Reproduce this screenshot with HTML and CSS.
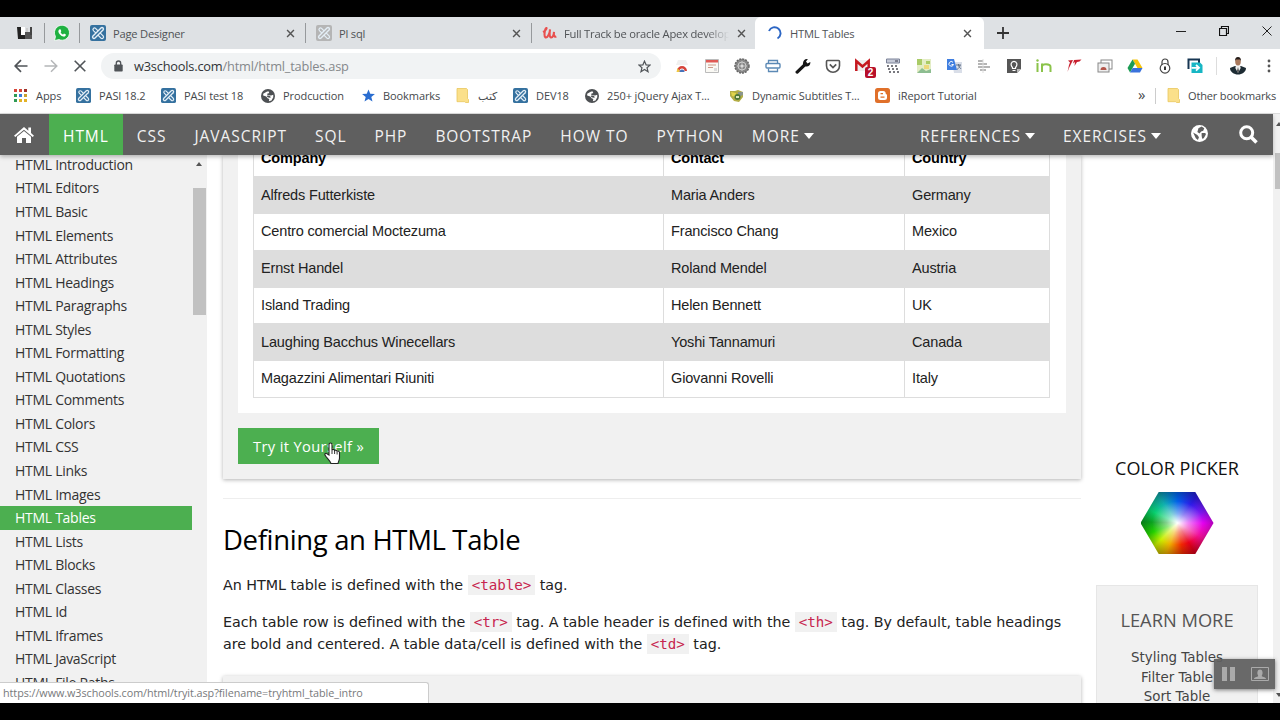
FILE: index.html
```html
<!DOCTYPE html>
<html lang="en">
<head>
    <meta charset="UTF-8">
    <meta name="viewport" content="width=device-width, initial-scale=1.0">
    <title>HTML Tables</title>
    <link rel="stylesheet" href="styles.css">
</head>
<body>
    <!-- Shared icons -->
    <svg class="defs" width="0" height="0">
        <symbol id="apex" viewBox="0 0 16 16">
            <rect width="16" height="16" rx="2" fill="currentColor"/>
            <g fill="none" stroke-linecap="round">
                <path d="M4.500 4.500l7.500 7.500" stroke="#e4eef6" stroke-width="4.200"/>
                <path d="M4.500 4.500l7.500 7.500" stroke="currentColor" stroke-width="1.800"/>
                <path d="M12 4l-8 8" stroke="#e4eef6" stroke-width="4.200"/>
                <path d="M12 4l-8 8" stroke="currentColor" stroke-width="1.500"/>
            </g>
        </symbol>
        <symbol id="close" viewBox="0 0 10 10">
            <path d="M1.2 1.2l7.6 7.6M8.8 1.2L1.2 8.8" stroke="currentColor" stroke-width="1.6"/>
        </symbol>
        <symbol id="globe" viewBox="0 0 16 16">
            <circle cx="8" cy="8" r="8" fill="currentColor"/>
            <path d="M2.500 5.500l4-2.500 2-.5 1 2-2.500 1 .5 1.500 4 .5 2.500-1v3l-2 3.500-3 1 .5-2.500-2-1-1.500-2-3.500-1z" fill="#fff"/>
            <path d="M7 7.500l3 .5 1.500 1.500-2 .5-2.500-1z" fill="currentColor"/>
        </symbol>
        <symbol id="globe2" viewBox="0 0 16 16">
            <circle cx="8" cy="8" r="8" fill="#fff"/>
            <path d="M7 3l3-1.500 2.500 1.500-1 2.500-2 .5-1.500 2-2-1.500zM10 7.500l3.500 0 .5 1.500-2 3.500-1.500.5-.5-3zM2 7l4 2.500 1.500 2-1 2.500-2-1.500z" fill="#5f5f5f"/>
        </symbol>
        <symbol id="folder" viewBox="0 0 13 15">
            <path d="M1 .5h9.500l1 1v9l1 1v3h-3l-1-.8H1z" fill="#fbe08a" stroke="#e8c65d" stroke-width=".8"/>
        </symbol>
    </svg>

    <div class="screen">
        <!-- Tab strip -->
        <div class="tabs">
            <div class="tab pinned first">
                <svg width="16" height="14" viewBox="0 0 16 14"><path d="M0 1h4v8h4v4H1z" fill="#222"/><path d="M4 1h4v8H4z" fill="#fff"/><path d="M8 6h7v7H8z" fill="#555"/><path d="M9 2h2v4H9z" fill="#ccc"/><path d="M13 1h2v8h-2z" fill="#444"/></svg>
            </div>
            <div class="tab pinned">
                <svg width="16" height="16" viewBox="0 0 16 16"><path d="M.5 15.500l1-4A7.500 7.500 0 1 1 5 14.600z" fill="#1fb141" stroke="#fff" stroke-width=".8"/><path d="M5 4.500l1.500-.2.8 2-.7.9c.6 1.200 1.300 1.800 2.500 2.300l.9-.9 1.900 1c0 1.500-1.300 2.200-2.400 2C6.800 11 4.500 8.500 4.300 6.200z" fill="#fff"/></svg>
            </div>
            <div class="tab">
                <svg class="fav blue" width="16" height="16"><use href="#apex"/></svg>
                <span class="tab-title">Page Designer</span>
                <svg class="x" width="9" height="9"><use href="#close"/></svg>
            </div>
            <div class="tab">
                <svg class="fav grey" width="16" height="16"><use href="#apex"/></svg>
                <span class="tab-title">Pl sql</span>
                <svg class="x" width="9" height="9"><use href="#close"/></svg>
            </div>
            <div class="tab last">
                <svg class="fav" width="15" height="12" viewBox="0 0 15 12"><path d="M1 5c2-1 4-3.500 3.500-4C3 1 1.500 9 3.500 10.500 6 11 8 5 8 2.500 7.500 6 7.500 10 9 10.500c2 .2 3-3.500 3-5.500-.3 2-.3 5.500 2.300 4.500" fill="none" stroke="#e8504f" stroke-width="2.100"/></svg>
                <span class="tab-title fade">Full Track be oracle Apex develop</span>
                <svg class="x" width="9" height="9"><use href="#close"/></svg>
            </div>
            <div class="tab active">
                <svg class="fav spin" width="14" height="14" viewBox="0 0 14 14"><path d="M1 5A6 6 0 1 1 9.500 12.500" fill="none" stroke="#2c66c4" stroke-width="1.900"/></svg>
                <span class="tab-title">HTML Tables</span>
                <svg class="x" width="9" height="9"><use href="#close"/></svg>
            </div>
            <svg class="plus" width="12" height="12" viewBox="0 0 12 12"><path d="M6 0v12M0 6h12" stroke="#333" stroke-width="1.800"/></svg>
            <div class="window-btns">
                <svg width="10" height="10" viewBox="0 0 10 10"><path d="M0 5.500h10" stroke="#222"/></svg>
                <svg width="10" height="10" viewBox="0 0 10 10"><path d="M.5 2.500h7v7h-7zM2.500 2.500v-2h7v7h-2" fill="none" stroke="#111" stroke-width="1.200"/></svg>
                <svg width="10" height="10" viewBox="0 0 10 10"><path d="M.5.5l9 9M9.500.5l-9 9" stroke="#222"/></svg>
            </div>
        </div>

        <!-- Address bar -->
        <div class="toolbar">
            <div class="history">
                <svg width="14" height="14" viewBox="0 0 14 14"><path d="M13.500 7H1.500M7 1.200L1.200 7 7 12.800" fill="none" stroke="#505458" stroke-width="1.700"/></svg>
                <svg width="14" height="14" viewBox="0 0 14 14"><path d="M.5 7h12M7 1.200L12.800 7 7 12.800" fill="none" stroke="#b4b6b8" stroke-width="1.500"/></svg>
                <svg width="12" height="12" viewBox="0 0 12 12"><path d="M.7.7l10.600 10.600M11.300.7L.7 11.300" stroke="#505458" stroke-width="1.600"/></svg>
            </div>
            <div class="address">
                <svg width="9" height="12" viewBox="0 0 9 12"><path d="M2.300 5V3.200a2.200 2.200 0 0 1 4.400 0V5" fill="none" stroke="#505458" stroke-width="1.300"/><rect x=".3" y="4.500" width="8.400" height="7" rx=".8" fill="#505458"/></svg>
                <span class="url">w3schools.com<span>/html/html_tables.asp</span></span>
                <svg class="star" width="13" height="13" viewBox="0 0 14 14"><path d="M7 1.200l1.700 4 4.300.3-3.300 2.800 1.100 4.300L7 10.300l-3.800 2.300 1.100-4.300L1 5.500l4.300-.3z" fill="none" stroke="#505458" stroke-width="1.300"/></svg>
            </div>
            <div class="extensions">
                <svg viewBox="0 0 16 16"><path d="M4 2h8l2 5H2z" fill="#f0f0f0"/><path d="M3 13a5 5 0 0 1 10 0h-2.500a2.500 2.500 0 0 0-5 0z" fill="#d6433a"/><path d="M2.500 14l1-4 3 4z" fill="#f0c744"/><path d="M5.500 14a2.500 2.500 0 0 1 5 0z" fill="#4772b8"/></svg>
                <svg viewBox="0 0 16 16"><path d="M1.500 1.500h13v13h-13z" fill="#faf9f4" stroke="#bbb"/><path d="M2 2h12v2.500H2z" fill="#e05a55"/><path d="M4 7h8M4 9.500h5" stroke="#c98"/><path d="M10 10h3v3h-3z" fill="#ddd"/></svg>
                <svg viewBox="0 0 16 16"><circle cx="8" cy="8" r="7" fill="#888" stroke="#666" stroke-width="1.500" stroke-dasharray="2 1"/><circle cx="8" cy="8" r="4" fill="none" stroke="#ccc"/><circle cx="8" cy="8" r="1.500" fill="#eee"/><path d="M8 3v10M3 8h10" stroke="#ccc" stroke-width=".7"/></svg>
                <svg viewBox="0 0 16 16"><path d="M3.500 5.500v-3h9v3M3.500 10.500v3h9v-3" fill="none" stroke="#5b89b5" stroke-width="1.300"/><rect x="1" y="5.500" width="14" height="4.500" rx="1" fill="#fff" stroke="#5b89b5" stroke-width="1.400"/></svg>
                <svg viewBox="0 0 16 16"><path d="M.5 13.500L8 6.300C7.500 3 10 .5 12.800 1.200L11 3.500l1.500 2L15.300 4c.5 3-2 5.200-5 4.400L3 15.500c-1.500.7-3-.8-2.500-2z" fill="#161616"/></svg>
                <svg viewBox="0 0 16 16"><path d="M2.500 2.500h11q1 0 1 1v4.300a6.500 6.500 0 0 1-13 0V3.500q0-1 1-1z" fill="none" stroke="#555" stroke-width="1.600"/><path d="M4.800 6.300L8 9.500l3.200-3.200" fill="none" stroke="#555" stroke-width="1.700"/></svg>
                <div class="mail">
                    <svg viewBox="0 0 16 16"><path d="M0 2h15v11H0z" fill="#eee"/><path d="M1.300 13V3L7.500 8.500 13.700 3v10" fill="none" stroke="#c5181f" stroke-width="2.500"/></svg>
                    <span class="badge">2</span>
                </div>
                <svg viewBox="0 0 16 16"><path d="M1.500 1h13v4h-13z" fill="#c5c9d6" stroke="#7b8298"/><path d="M10 3h3" stroke="#334"/><path d="M2 8h12M3 11h10M4 14h10" stroke="#4d4d55" stroke-width="1.500" stroke-dasharray="2 2"/></svg>
                <svg viewBox="0 0 16 16"><path d="M1 1h14v14H1z" fill="#e3edc5"/><path d="M1 1h5v6H1zM10 3h4v3h-4z" fill="#a9cb66"/><path d="M1 15l5-5 4 3 5-2v4z" fill="#8dbd91"/><path d="M8 7h5v4H8z" fill="#ecd97b"/></svg>
                <svg viewBox="0 0 16 16"><path d="M6 4h10v11H8z" fill="#d9dee8"/><path d="M1 1h7l3 11H1z" fill="#3f7ee0"/><path d="M7 4.300a2.300 2.300 0 1 0 .5 2.200H5.500" fill="none" stroke="#fff"/><path d="M10 7h5M12.500 6v1c0 2 2 3 2.500 4M14 7c0 2-1 3-3 4.500" stroke="#64748a" fill="none"/></svg>
                <svg viewBox="0 0 16 16"><path d="M2 3h5M2 6h9M2 9h12M4 12h6" stroke="#b5b5b5" stroke-width="2"/><path d="M7 1v14" stroke="#ddd"/></svg>
                <svg viewBox="0 0 16 16"><path d="M1 1h14v10l-4 4H1z" fill="#565656"/><path d="M11 15v-4h4z" fill="#bbb"/><path d="M6.500 9.500C4 7 5.200 3.300 8 3.300s4 3.700 1.500 6.200v1h-3zM6.500 12.500h3" fill="none" stroke="#fff" stroke-width="1.200"/></svg>
                <svg viewBox="0 0 16 16"><path d="M1.500 5v9M6 14V5.500M6 8.500q0-2.200 4-2.200 4.500 0 4.500 2.700v5" fill="none" stroke="#8bc34a" stroke-width="2"/><circle cx="1.500" cy="2.500" r="1.200" fill="#8bc34a"/></svg>
                <svg viewBox="0 0 16 16"><path d="M2 2.500l5-.5-2 4-2 4-1.500 4 1.500-7 1-2.500zM8 2l7.500-.5-2 2-2.500.5-2.500 4 .500-4-2 1.500z" fill="#c8202f"/></svg>
                <svg viewBox="0 0 16 16"><rect x="4" y="2" width="11" height="9" fill="#fff" stroke="#888"/><rect x="1" y="5" width="11" height="9" fill="#eee" stroke="#888"/><path d="M3.500 12a3 3 0 0 1 6 0z" fill="#b4564b"/></svg>
                <svg viewBox="0 0 16 16"><path d="M5.500 1.500h5l5 8.500h-5z" fill="#f6c40d"/><path d="M5.500 1.500L8 5.800 3 14.500.5 10z" fill="#1c9c54"/><path d="M5.700 10h9.800L13 14.500H3z" fill="#3a72dc"/></svg>
                <svg viewBox="0 0 16 16"><path d="M5 7V4a3 3 0 0 1 6 0v3" fill="none" stroke="#444" stroke-width="1.200"/><circle cx="8" cy="10.300" r="4.800" fill="#fff" stroke="#444" stroke-width="1.200"/><path d="M8 8.500v3.500" stroke="#333" stroke-width="2"/></svg>
                <svg viewBox="0 0 16 16"><path d="M1.500 11V1.500H12V5" fill="none" stroke="#173653" stroke-width="2"/><path d="M4.500 4.500H13l2.500 2.500v8h-11z" fill="#17b6c4"/><path d="M4.500 9.800h7M9 7l3 2.800-3 2.800" fill="none" stroke="#fff" stroke-width="1.800"/></svg>
            </div>
            <div class="profile">
                <svg width="18" height="18" viewBox="0 0 18 18"><path d="M1 11l5-2h6l5 2c0 4-4 6.500-8 6.500S1 15 1 11z" fill="#1d2b33"/><path d="M7 8h4l.7 3L9 16l-2.700-5z" fill="#f1f1f1"/><path d="M9 10l.8 4L9 16l-.8-2z" fill="#222"/><ellipse cx="9" cy="4.800" rx="2.800" ry="3.700" fill="#a9795d"/><path d="M6 4q0-4 3-4t3 4l-1-1.500H7z" fill="#241b18"/></svg>
                <svg width="4" height="14" viewBox="0 0 4 14"><circle cx="2" cy="2" r="1.400" fill="#555"/><circle cx="2" cy="7" r="1.400" fill="#555"/><circle cx="2" cy="12" r="1.400" fill="#555"/></svg>
            </div>
        </div>

        <!-- Bookmarks -->
        <div class="bookmarks">
            <a class="bm apps"><svg width="14" height="13" viewBox="0 0 14 13"><path d="M0 1.500h3M5 1.500h3" stroke="#d8473a" stroke-width="3"/><path d="M10 1.500h3" stroke="#a0322a" stroke-width="3"/><path d="M0 6.500h3M0 11.500h3" stroke="#2f9a55" stroke-width="3"/><path d="M5 6.500h3" stroke="#3a7bdc" stroke-width="3"/><path d="M10 6.500h3" stroke="#c9a02e" stroke-width="3"/><path d="M5 11.500h3M10 11.500h3" stroke="#e3b226" stroke-width="3"/></svg><span>Apps</span></a>
            <a class="bm pasi"><svg class="blue" width="15" height="15"><use href="#apex"/></svg><span>PASI 18.2</span></a>
            <a class="bm pasi-test"><svg class="blue" width="15" height="15"><use href="#apex"/></svg><span>PASI test 18</span></a>
            <a class="bm prod"><svg class="dark" width="14" height="14"><use href="#globe"/></svg><span>Prodcuction</span></a>
            <a class="bm marks"><svg width="13" height="13" viewBox="0 0 14 14"><path d="M7 .5l1.900 4.600 5 .3-3.900 3.200 1.300 4.900L7 10.800l-4.300 2.700L4 8.600.1 5.400l5-.3z" fill="#2a6dd0"/></svg><span>Bookmarks</span></a>
            <a class="bm books"><svg width="13" height="15"><use href="#folder"/></svg><span>كتب</span></a>
            <a class="bm dev"><svg class="blue" width="15" height="15"><use href="#apex"/></svg><span>DEV18</span></a>
            <a class="bm ajax"><svg class="dark" width="14" height="14"><use href="#globe"/></svg><span>250+ jQuery Ajax T...</span></a>
            <a class="bm subs"><svg width="14" height="14" viewBox="0 0 14 14"><path d="M0 2l5 0 3-1 5 2v5l-4 5-5-1-4-5z" fill="#b3ad45"/><path d="M1 3l5 1v4L2 7z" fill="#e1d44c"/><path d="M8 3h5v3l-5 2z" fill="#8b968c"/><circle cx="7.500" cy="8" r="3" fill="#4e7838"/><path d="M6 7h3v2H6z" fill="#dde7bb"/></svg><span>Dynamic Subtitles T...</span></a>
            <a class="bm report"><svg width="15" height="15" viewBox="0 0 15 15"><rect width="15" height="15" rx="2.500" fill="#e0702a"/><path d="M5.500 3h2.700a2.500 2.500 0 0 1 2.500 2.500q0 1 1.300 1v3A2.500 2.500 0 0 1 9.500 12h-4A2.500 2.500 0 0 1 3 9.500v-4A2.500 2.500 0 0 1 5.500 3z" fill="#fff"/><path d="M5.500 5.700H8M5.500 9.200h4" stroke="#e0702a" stroke-width="1.300"/></svg><span>iReport Tutorial</span></a>
            <span class="more-marks">»</span>
            <a class="bm other"><svg width="13" height="15"><use href="#folder"/></svg><span>Other bookmarks</span></a>
        </div>

        <!-- Page -->
        <div class="page">
            <nav class="topnav">
                <a class="home"><svg width="20" height="18" viewBox="0 0 20 18"><path d="M10 1L0 9.700l1.300 1.300L10 3.800l8.700 7.200L20 9.700l-3-2.600V1.500h-2.700v3.200z" fill="#fff"/><path d="M10 5l-7 5.800V17h5v-5h4v5h5v-6.200z" fill="#fff"/></svg></a>
                <a class="current">HTML</a>
                <a>CSS</a>
                <a>JAVASCRIPT</a>
                <a>SQL</a>
                <a>PHP</a>
                <a>BOOTSTRAP</a>
                <a>HOW TO</a>
                <a>PYTHON</a>
                <a>MORE<i class="caret"></i></a>
                <div class="nav-right">
                    <a>REFERENCES<i class="caret"></i></a>
                    <a>EXERCISES<i class="caret"></i></a>
                    <a class="world"><svg width="17" height="17"><use href="#globe2"/></svg></a>
                    <a class="search"><svg width="19" height="19" viewBox="0 0 19 19"><circle cx="7.700" cy="7.700" r="6" fill="none" stroke="#fff" stroke-width="3"/><path d="M12 12l5.500 5.500" stroke="#fff" stroke-width="3.500"/></svg></a>
                </div>
            </nav>

            <div class="content">
                <aside class="sidebar">
                    <div class="links">
                        <a>HTML Introduction</a>
                        <a>HTML Editors</a>
                        <a>HTML Basic</a>
                        <a>HTML Elements</a>
                        <a>HTML Attributes</a>
                        <a>HTML Headings</a>
                        <a>HTML Paragraphs</a>
                        <a>HTML Styles</a>
                        <a>HTML Formatting</a>
                        <a>HTML Quotations</a>
                        <a>HTML Comments</a>
                        <a>HTML Colors</a>
                        <a>HTML CSS</a>
                        <a>HTML Links</a>
                        <a>HTML Images</a>
                        <a class="current">HTML Tables</a>
                        <a>HTML Lists</a>
                        <a>HTML Blocks</a>
                        <a>HTML Classes</a>
                        <a>HTML Id</a>
                        <a>HTML Iframes</a>
                        <a>HTML JavaScript</a>
                        <a>HTML File Paths</a>
                    </div>
                    <div class="side-scroll">
                        <i class="up"></i>
                        <div class="thumb"></div>
                    </div>
                </aside>

                <main class="main">
                    <div class="example">
                        <div class="result">
                            <table class="customers">
                                <tr><th>Company</th><th>Contact</th><th>Country</th></tr>
                                <tr><td>Alfreds Futterkiste</td><td>Maria Anders</td><td>Germany</td></tr>
                                <tr><td>Centro comercial Moctezuma</td><td>Francisco Chang</td><td>Mexico</td></tr>
                                <tr><td>Ernst Handel</td><td>Roland Mendel</td><td>Austria</td></tr>
                                <tr><td>Island Trading</td><td>Helen Bennett</td><td>UK</td></tr>
                                <tr><td>Laughing Bacchus Winecellars</td><td>Yoshi Tannamuri</td><td>Canada</td></tr>
                                <tr><td>Magazzini Alimentari Riuniti</td><td>Giovanni Rovelli</td><td>Italy</td></tr>
                            </table>
                        </div>
                        <a class="try-btn">Try it Yourself »</a>
                    </div>
                    <hr>
                    <h2>Defining an HTML Table</h2>
                    <p>An HTML table is defined with the <code>&lt;table&gt;</code> tag.</p>
                    <p>Each table row is defined with the <code>&lt;tr&gt;</code> tag. A table header is defined with the <code>&lt;th&gt;</code> tag. By default, table headings<br>are bold and centered. A table data/cell is defined with the <code>&lt;td&gt;</code> tag.</p>
                    <div class="example next"></div>
                </main>

                <aside class="right">
                    <h4>COLOR PICKER</h4>
                    <div class="picker"></div>
                    <div class="learn">
                        <h4>LEARN MORE</h4>
                        <a>Styling Tables</a>
                        <a>Filter Table</a>
                        <a>Sort Table</a>
                    </div>
                </aside>
            </div>

            <div class="page-scroll">
                <i class="up"></i>
                <div class="thumb"></div>
                <i class="down"></i>
            </div>
        </div>

        <div class="status">https://www.w3schools.com/html/tryit.asp?filename=tryhtml_table_intro</div>

        <div class="recorder">
            <svg width="14" height="14" viewBox="0 0 14 14"><path d="M0 0h5v14H0zM8 0h5v14H8z" fill="#aaa"/></svg>
            <svg width="18" height="14" viewBox="0 0 18 14"><path d="M.5.5h17v13H.5z" fill="none" stroke="#aaa"/><path d="M3 12c0-2 3-1.500 4.300-3C5.500 6 6.500 2.500 9 2.500S12.500 6 10.700 9c1.300 1.500 4.300 1 4.300 3z" fill="#aaa"/></svg>
        </div>

        <svg class="pointer" width="17" height="23" viewBox="0 0 17 23"><path d="M5 13V2.500a1.500 1.500 0 0 1 3 0V8c.5-1 2.500-.8 2.600.5.7-.7 2.300-.4 2.500.8.9-.6 2.400 0 2.400 1.200V16c0 2-1 3-1.500 5.500H7C6 18.500 2 15.500 1 13c-.6-1.500 1-2.200 2-1.300z" fill="#fff" stroke="#222" stroke-width="1.100"/><path d="M8 8v4M10.600 9v3M13.100 10v2.500" stroke="#222" stroke-width=".9"/></svg>
    </div>
</body>
</html>
```
FILE: styles.css
```css
/* General Styles */
* {
    box-sizing: border-box;
}

body {
    margin: 0;
    background-color: #000;
    font-family: "Open Sans", "Noto Sans", sans-serif;
    overflow: hidden;
}

svg {
    display: block;
    flex-shrink: 0;
}

.defs {
    position: absolute;
}

.screen {
    position: relative;
    width: 1280px;
    height: 703px;
    padding-top: 17px;
    overflow: hidden;
}

.blue {
    color: #35719f;
}

.grey {
    color: #b5b5b5;
}

.dark {
    color: #4d5053;
}

/* Tab strip */
.tabs {
    display: flex;
    height: 32px;
    background-color: #dee1e4;
    align-items: center;
}

.tab {
    display: flex;
    align-items: center;
    width: 226px;
    height: 20px;
    padding-left: 10px;
    padding-right: 10px;
    border-right: 1px solid #96999c;
    color: #505356;
    font-size: 11.2px;
}

.tab.pinned {
    width: 35px;
    padding: 0 0 0 9px;
}

.tab.first {
    width: 45px;
    padding-left: 17px;
}

.tab.last {
    width: 223px;
    padding-right: 9px;
    border-right: none;
}

.tab .x {
    color: #555;
    margin-left: auto;
}

.tab-title {
    margin-left: 7px;
    white-space: nowrap;
    letter-spacing: -0.22px;
}

.tab-title.fade {
    width: 165px;
    overflow: hidden;
    -webkit-mask-image: linear-gradient(to right, #000 86%, transparent);
    mask-image: linear-gradient(to right, #000 86%, transparent);
}

.tab.active {
    width: 229px;
    height: 32px;
    background-color: #fff;
    border-right: none;
    border-radius: 6px 6px 0 0;
    padding-left: 13px;
    padding-right: 12px;
}

.tab.active .tab-title {
    margin-left: 8px;
}

.plus {
    margin-left: 13px;
}

.window-btns {
    display: flex;
    gap: 33px;
    margin-left: auto;
    padding-right: 8px;
    padding-bottom: 5px;
}

/* Address bar */
.toolbar {
    display: flex;
    align-items: center;
    height: 34px;
    background-color: #fff;
}

.history {
    display: flex;
    align-items: center;
    gap: 16px;
    width: 101px;
    padding-left: 14px;
}

.address {
    display: flex;
    align-items: center;
    width: 560px;
    height: 26px;
    padding: 0 10px 0 13px;
    border-radius: 13px;
    background-color: #f1f3f4;
}

.url {
    margin-left: 11px;
    font-size: 12.8px;
    letter-spacing: -0.2px;
    color: #303336;
}

.url span {
    color: #85888b;
}

.star {
    margin-left: auto;
}

.extensions {
    display: flex;
    gap: 14.2px;
    padding-left: 13px;
}

.extensions svg {
    width: 16px;
    height: 16px;
}

.mail {
    position: relative;
}

.badge {
    position: absolute;
    left: 10px;
    top: 9px;
    width: 11px;
    height: 11px;
    border-radius: 2px;
    background-color: #b8102a;
    color: #fff;
    font: bold 10px/11px "Liberation Sans", sans-serif;
    text-align: center;
}

.profile {
    display: flex;
    align-items: center;
    gap: 20px;
    margin-left: 13px;
    padding-left: 12px;
    border-left: 1px solid #ddd;
}

/* Bookmarks */
.bookmarks {
    display: flex;
    align-items: center;
    height: 31px;
    padding: 0 0 5px 14px;
    background-color: #fff;
    border-bottom: 1px solid #ddd;
    font-size: 11px;
    letter-spacing: -0.08px;
    color: #45484b;
}

.bm {
    display: flex;
    align-items: center;
    gap: 8px;
    flex-shrink: 0;
    white-space: nowrap;
}

.apps { width: 62px; }
.pasi { width: 85px; }
.pasi-test { width: 100px; }
.prod { width: 101px; }
.marks { width: 94px; }
.books { width: 57px; gap: 9px; }
.dev { width: 72px; }
.ajax { width: 145px; }
.subs { width: 145px; }
.report { width: 263px; }

.more-marks {
    width: 17px;
    font-size: 15px;
    line-height: 13px;
    padding-bottom: 3px;
}

.other {
    height: 16px;
    padding-left: 11px;
    border-left: 1px solid #ccc;
    letter-spacing: -0.15px;
}

/* Page */
.page {
    position: relative;
    height: 589px;
    background-color: #fff;
}

.topnav {
    position: relative;
    z-index: 2;
    display: flex;
    width: 1273px;
    height: 41px;
    background-color: #5f5f5f;
    box-shadow: 0 2px 4px rgba(0, 0, 0, 0.25);
    font-size: 15.5px;
    letter-spacing: 0.95px;
    color: #f1f1f1;
}

.topnav a {
    display: flex;
    align-items: center;
    height: 41px;
    padding: 3px 14px 0;
    white-space: nowrap;
}

.topnav .home {
    width: 49px;
    padding-top: 0;
}

.topnav .current {
    background-color: #4caf50;
    color: #fff;
}

.nav-right {
    display: flex;
    margin-left: auto;
}

.caret {
    margin-left: 4px;
    border: 5.5px solid transparent;
    border-top: 6px solid #fff;
    border-bottom: none;
}

.topnav .world {
    width: 49px;
    padding: 0 0 2px 16px;
}

.topnav .search {
    width: 49px;
    padding: 0 15px;
}

.content {
    display: flex;
    width: 1273px;
    height: 548px;
    overflow: hidden;
}

/* Sidebar */
.sidebar {
    display: flex;
    justify-content: space-between;
    width: 207px;
    flex-shrink: 0;
    background-color: #f1f1f1;
}

.links {
    width: 192px;
    margin-top: -2.100px;
    font-size: 14px;
    color: #333;
}

.links a {
    display: block;
    height: 23.550px;
    padding-left: 15px;
    line-height: 23.550px;
    letter-spacing: -0.28px;
}

.links .current {
    background-color: #4caf50;
    color: #fff;
}

.side-scroll {
    width: 14px;
    padding-top: 7px;
}

.up {
    display: block;
    width: 0;
    margin-left: 3px;
    border: 3.500px solid transparent;
    border-top: none;
    border-bottom: 4px solid #555;
}

.side-scroll .thumb {
    width: 13px;
    height: 127px;
    margin-top: 22px;
    background-color: #c1c1c1;
}

/* Main column */
.main {
    width: 858px;
    margin-left: 16px;
    flex-shrink: 0;
    font-family: "DejaVu Sans", sans-serif;
    font-size: 14.300px;
    color: #222;
}

.example {
    height: 324px;
    padding: 0 15px;
    background-color: #f1f1f1;
    box-shadow: 0 1px 4px rgba(0, 0, 0, 0.3);
}

.result {
    height: 258px;
    padding: 0 16px 0 15px;
    background-color: #fff;
}

.customers {
    position: relative;
    top: -15.500px;
    width: 797px;
    table-layout: fixed;
    border-collapse: collapse;
    font-family: "Liberation Sans", Arial, sans-serif;
    font-size: 14.500px;
    letter-spacing: -0.15px;
    color: #222;
}

.customers th,
.customers td {
    height: 36.770px;
    padding: 0 7px 1px;
    border: 1px solid #ddd;
    text-align: left;
}

.customers th {
    color: #000;
}

.customers th:nth-child(1) { width: 410px; }
.customers th:nth-child(2) { width: 241px; }

.customers tr:nth-child(even) {
    background-color: #ddd;
}

.try-btn {
    display: inline-block;
    width: 141px;
    height: 36px;
    margin-top: 15px;
    padding-left: 15px;
    background-color: #4caf50;
    color: #fff;
    font-size: 14.700px;
    letter-spacing: 0.35px;
    line-height: 36px;
    white-space: nowrap;
    font-family: "Open Sans", sans-serif;
}

hr {
    margin: 19px 0 0;
    border: none;
    border-top: 1px solid #eee;
}

h2 {
    margin: 20px 0 0;
    font: 400 27.500px/42px "Open Sans", sans-serif;
    letter-spacing: -0.35px;
    color: #000;
}

p {
    margin: 14px 0 0;
    line-height: 22.700px;
    letter-spacing: -0.03px;
    white-space: nowrap;
}

h2 + p {
    margin-top: 13px;
}

code {
    padding: 2px 4px;
    background-color: #f1f1f1;
    color: #c7254e;
    font-family: "DejaVu Sans Mono", monospace;
    font-size: 14.200px;
}

.example.next {
    margin-top: 20px;
}

/* Right column */
.right {
    width: 162px;
    margin-left: 15px;
    padding-top: 300px;
    text-align: center;
    color: #444;
}

h4 {
    margin: 0;
    font-size: 18px;
    font-weight: 400;
    line-height: 26px;
    white-space: nowrap;
}

.right > h4 {
    color: #111;
}

.picker {
    width: 73px;
    height: 62px;
    margin: 11px auto 0;
    clip-path: polygon(25% 0, 75% 0, 100% 50%, 75% 100%, 25% 100%, 0 50%);
    background:
        radial-gradient(closest-side, #fff 0, rgba(255, 255, 255, 0.5) 30%, rgba(255, 255, 255, 0) 70%, rgba(0, 0, 0, 0.35) 115%),
        conic-gradient(#0060e8, #2c1ce8 35deg, #7a18f0 65deg, #e400f0 90deg, #f0109a 120deg, #e8001c 150deg, #f02a00 170deg, #f0b000 200deg, #c8f000 225deg, #22d000 250deg, #0aa020 272deg, #08d070 295deg, #10b0b0 325deg, #0060e8);
}

.learn {
    height: 200px;
    margin-top: 31px;
    padding-top: 21px;
    background-color: #f1f1f1;
    border: 1px solid #e6e6e6;
}

.learn h4 {
    margin-bottom: 15px;
    font-size: 18.300px;
    color: #555;
}

.learn a {
    display: block;
    font: 13.400px/19.700px "DejaVu Sans", sans-serif;
}

/* Scrollbar of the page */
.page-scroll {
    position: absolute;
    right: 0;
    top: 0;
    width: 7px;
    height: 589px;
    padding-top: 8px;
    background-color: #f1f1f1;
}

.page-scroll .thumb {
    width: 5px;
    height: 36px;
    margin: 27px 0 0 2px;
    background-color: #c1c1c1;
}

.down {
    display: block;
    margin: 504px 0 0 3px;
    width: 0;
    border: 3.500px solid transparent;
    border-bottom: none;
    border-top: 4px solid #555;
}

/* Overlays */
.status {
    position: absolute;
    left: 0;
    bottom: 0;
    z-index: 3;
    width: 429px;
    height: 21px;
    padding-left: 3px;
    background-color: #fff;
    border: 1px solid #ccc;
    border-left: none;
    border-bottom: none;
    border-radius: 0 3px 0 0;
    font-size: 10.800px;
    letter-spacing: -0.06px;
    line-height: 20px;
    color: #77797b;
}

.recorder {
    position: absolute;
    left: 1214px;
    top: 659px;
    z-index: 3;
    display: flex;
    align-items: center;
    gap: 15px;
    width: 61px;
    height: 30px;
    padding-left: 8px;
    background-color: rgba(95, 95, 95, 0.93);
    box-shadow: 0 1px 4px rgba(0, 0, 0, 0.5);
}

.pointer {
    position: absolute;
    left: 324px;
    top: 442px;
}
```
